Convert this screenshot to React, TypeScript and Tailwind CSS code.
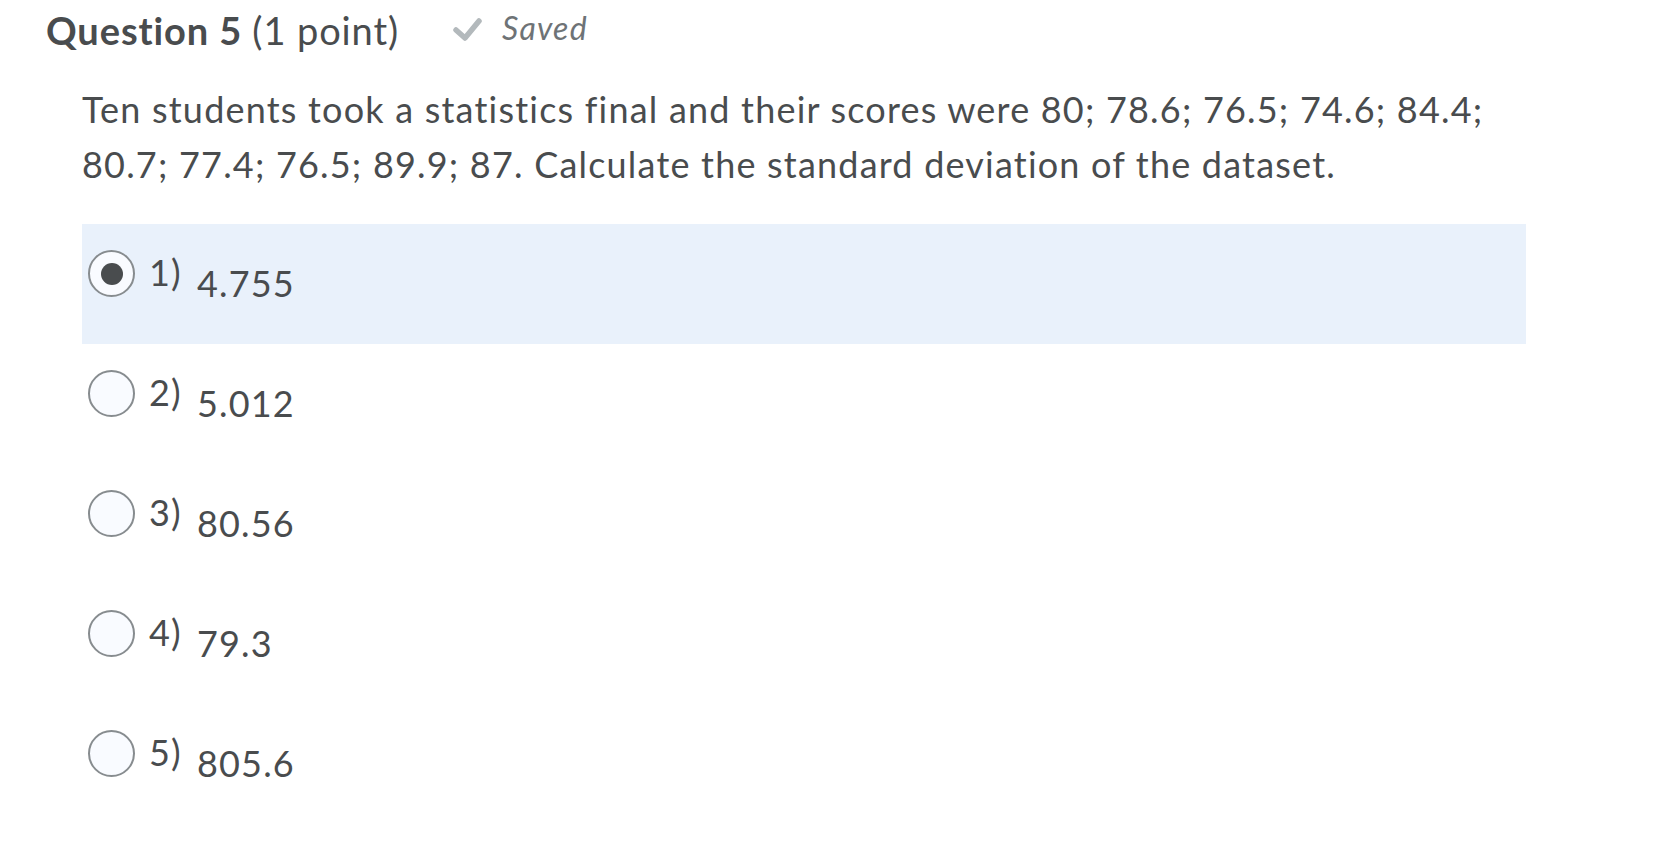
import React from "react";

const options = [
  { n: "1)", v: "4.755", selected: true },
  { n: "2)", v: "5.012", selected: false },
  { n: "3)", v: "80.56", selected: false },
  { n: "4)", v: "79.3", selected: false },
  { n: "5)", v: "805.6", selected: false },
];

export default function App() {
  return (
    <div
      className="min-h-[850px] w-full bg-white text-[#494c4e] [font-variant-ligatures:none]"
      style={{ fontFamily: "Lato, 'Noto Sans', sans-serif" }}
    >
      <div className="pl-[46px] pt-[7px]">
        <div className="flex items-start">
          <h2 className="text-[38px] leading-[46px] font-bold whitespace-nowrap tracking-[0.9px]">
            Question 5 <span className="font-normal">(1 point)</span>
          </h2>
          <svg
            className="ml-[53px] mt-[10px]"
            width="30"
            height="26"
            viewBox="0 0 30 26"
            fill="none"
          >
            <polyline
              points="4,13 13,21 27,4"
              stroke="#b3b9bc"
              strokeWidth="5.5"
              strokeLinecap="round"
              strokeLinejoin="round"
            />
          </svg>
          <span className="ml-[20px] mt-[2px] text-[32px] leading-[38px] italic tracking-[1.2px] text-[#6e7376]">
            Saved
          </span>
        </div>
      </div>
      <div className="pl-[82px] pr-[142px]">
        <p className="mt-[29px] text-[36px] leading-[55px] tracking-[1.2px]">
          Ten students took a statistics final and their scores were 80; 78.6; 76.5; 74.6; 84.4;
          80.7; 77.4; 76.5; 89.9; 87. Calculate the standard deviation of the dataset.
        </p>
        <div className="mt-[32px] flex flex-col">
          {options.map((o) => (
            <div
              key={o.n}
              className={`flex h-[120px] items-start pl-[6px] pt-[26px] tracking-[1.2px] ${
                o.selected ? "bg-[#e9f1fb]" : "bg-white"
              }`}
            >
              <div className="flex h-[47px] w-[47px] shrink-0 items-center justify-center rounded-full border-2 border-[#878c8f] bg-[#f9fbff]">
                {o.selected && <div className="h-[22px] w-[22px] rounded-full bg-[#494c4e]" />}
              </div>
              <span className="ml-[14px] text-[36px] leading-[44px]">{o.n}</span>
              <span className="ml-[15px] mt-[11px] text-[36px] leading-[44px]">{o.v}</span>
            </div>
          ))}
        </div>
      </div>
    </div>
  );
}
